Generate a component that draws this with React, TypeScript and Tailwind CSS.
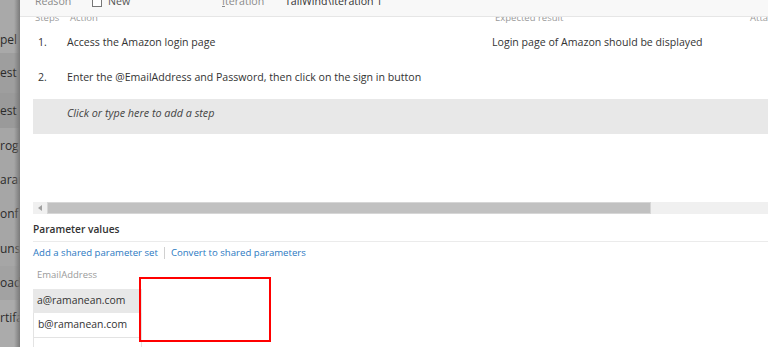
import { ReactNode } from 'react';

const font = { fontFamily: '"Open Sans", "Noto Sans", sans-serif' };

const sideRows: { text: string; h: string; bg: string }[] = [
  { text: 'pel', h: 'h-[53px] pt-[26px]', bg: 'bg-[#a9a9a9]' },
  { text: 'est', h: 'h-[40px]', bg: 'bg-[#9e9e9e]' },
  { text: 'est', h: 'h-[35px]', bg: 'bg-[#9a9a9a]' },
  { text: 'rog', h: 'h-[35px]', bg: 'bg-[#a6a6a6]' },
  { text: 'arar', h: 'h-[34px]', bg: 'bg-[#a6a6a6]' },
  { text: 'onf', h: 'h-[34px]', bg: 'bg-[#a6a6a6]' },
  { text: 'uns', h: 'h-[35px]', bg: 'bg-[#a6a6a6]' },
  { text: 'oad', h: 'h-[34px]', bg: 'bg-[#a2a2a2]' },
  { text: 'rtifa', h: 'h-[47px] pb-[12px]', bg: 'bg-[#ababab]' },
];

function Sidebar() {
  return (
    <div className="relative w-[20px] shrink-0 overflow-hidden">
      {sideRows.map((r, i) => (
        <div key={i} className={`${r.h} ${r.bg} flex items-center whitespace-nowrap text-[12px] text-[#2b2b2b]`}>
          {r.text}
        </div>
      ))}
      <div className="absolute right-0 top-0 h-full w-[6px] bg-gradient-to-r from-transparent to-[#7a7a7a]" />
    </div>
  );
}

function StepRow({ n, action, expected }: { n: string; action: string; expected?: string }) {
  return (
    <div className="flex h-[35px] items-center text-[10.6px] text-[#333]">
      <div className="w-[34px] shrink-0 pl-[5px]">{n}</div>
      <div className="w-[425px] shrink-0 whitespace-nowrap">{action}</div>
      <div className="whitespace-nowrap">{expected}</div>
    </div>
  );
}

function Cell({ children, className }: { children?: ReactNode; className: string }) {
  return (
    <div className={`flex w-[109px] items-center pl-[4px] text-[10.4px] text-[#333] ${className}`}>{children}</div>
  );
}

export default function App() {
  return (
    <div className="flex h-[347px] w-[768px] overflow-hidden bg-white" style={font}>
      <Sidebar />
      <div className="relative flex flex-1 flex-col overflow-hidden bg-white">
        <div className="z-10 h-[17px] shrink-0 overflow-hidden border-b border-[#e6e6e6] bg-[#f8f8f8]">
          <div className="-mt-[8px] flex h-[20px] items-center text-[10.6px]">
            <span className="ml-[15px] w-[57px] shrink-0 text-[#8a8a8a]">Reason</span>
            <span className="h-[10px] w-[10px] shrink-0 border border-[#777] bg-white" />
            <span className="ml-[6px] w-[114px] shrink-0 text-[#555]">New</span>
            <span className="w-[63px] shrink-0 text-[#8a8a8a]">
              <span className="underline">I</span>teration
            </span>
            <span className="whitespace-nowrap text-[#333]">TailWind\Iteration 1</span>
          </div>
        </div>

        <div className="flex flex-col pl-[13px]">
          <div className="-mt-[6px] flex h-[14px] items-center whitespace-nowrap text-[9.5px] text-[#9a9a9a]">
            <span className="w-[37px] shrink-0 pl-[2px]">Steps</span>
            <span className="w-[425px] shrink-0">Action</span>
            <span className="w-[255px] shrink-0">Expected result</span>
            <span className="shrink-0">Attachments</span>
          </div>
          <StepRow n="1." action="Access the Amazon login page" expected="Login page of Amazon should be displayed" />
          <StepRow n="2." action="Enter the @EmailAddress and Password, then click on the sign in button" />
          <div className="mt-[4px] h-[35px] bg-[#e8e8e8] pl-[34px] pt-[6px] text-[10.8px] italic text-[#444]">
            Click or type here to add a step
          </div>

          <div className="mt-[68px] flex h-[12px] bg-[#f0f0f0]">
            <div className="flex w-[14px] items-center justify-center">
              <svg width="4" height="6" viewBox="0 0 4 6">
                <path d="M4 0 L0 3 L4 6 Z" fill="#a0a0a0" />
              </svg>
            </div>
            <div className="w-[604px] border border-[#d6d6d6] bg-[#c1c1c1]" />
          </div>

          <div className="mt-[7px] border-b border-[#ebebeb] pb-[4px] text-[10.2px] font-semibold leading-[16px] text-[#333]">
            Parameter values
          </div>

          <div className="mt-[4px] flex h-[14px] items-center whitespace-nowrap text-[9.6px] text-[#2b79c2]">
            <span>Add a shared parameter set</span>
            <span className="mx-[6px] h-[12px] w-px bg-[#d0d0d0]" />
            <span>Convert to shared parameters</span>
          </div>

          <div className="mt-[8px] h-[14px] pl-[4px] text-[9.5px] leading-[14px] text-[#9a9a9a]">EmailAddress</div>

          <div className="mt-[7px] flex flex-col">
            <Cell className="h-[24px] bg-[#e8e8e8]">a@ramanean.com</Cell>
            <Cell className="h-[25px] border-x border-b border-[#e3e3e3]">b@ramanean.com</Cell>
            <Cell className="h-[25px] border-x border-[#e3e3e3]" />
          </div>
        </div>

        <div className="absolute left-[119px] top-[277px] h-[65px] w-[132px] border-2 border-[#f00]" />
      </div>
    </div>
  );
}
